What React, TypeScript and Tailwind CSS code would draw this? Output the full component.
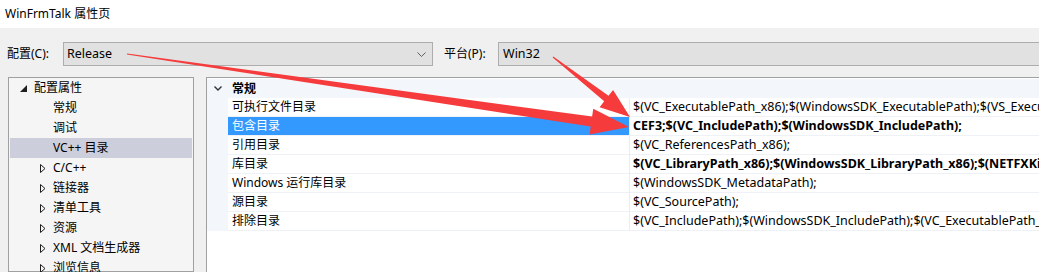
import React from "react";

const FONT = { fontFamily: "'Noto Sans', 'Noto Sans CJK SC', sans-serif" };

type Row = { name: string; value: string; bold?: boolean; selected?: boolean };

const rows: Row[] = [
  {
    name: "可执行文件目录",
    value:
      "$(VC_ExecutablePath_x86);$(WindowsSDK_ExecutablePath);$(VS_ExecutablePath);$(MSBuild_ExecutablePath);$(SystemRoot)\\SysWow64;$(FxCopDir);$(PATH);",
  },
  { name: "包含目录", value: "CEF3;$(VC_IncludePath);$(WindowsSDK_IncludePath);", bold: true, selected: true },
  { name: "引用目录", value: "$(VC_ReferencesPath_x86);" },
  {
    name: "库目录",
    value: "$(VC_LibraryPath_x86);$(WindowsSDK_LibraryPath_x86);$(NETFXKitsDir)Lib\\um\\x86",
    bold: true,
  },
  { name: "Windows 运行库目录", value: "$(WindowsSDK_MetadataPath);" },
  { name: "源目录", value: "$(VC_SourcePath);" },
  {
    name: "排除目录",
    value:
      "$(VC_IncludePath);$(WindowsSDK_IncludePath);$(VC_ExecutablePath_x86);$(VC_LibraryPath_x86);",
  },
];

const tree: { label: string; expander?: boolean; selected?: boolean }[] = [
  { label: "常规" },
  { label: "调试" },
  { label: "VC++ 目录", selected: true },
  { label: "C/C++", expander: true },
  { label: "链接器", expander: true },
  { label: "清单工具", expander: true },
  { label: "资源", expander: true },
  { label: "XML 文档生成器", expander: true },
  { label: "浏览信息", expander: true },
];

function arrowPoints(
  x1: number, y1: number, x2: number, y2: number,
  tw: number, sw: number, hw: number, hl: number
) {
  const dx = x2 - x1;
  const dy = y2 - y1;
  const L = Math.hypot(dx, dy);
  const ux = dx / L, uy = dy / L;
  const nx = -uy, ny = ux;
  const bx = x2 - ux * hl, by = y2 - uy * hl;
  const p = (x: number, y: number) => `${x.toFixed(1)},${y.toFixed(1)}`;
  return [
    p(x1 + nx * tw, y1 + ny * tw),
    p(bx + nx * sw, by + ny * sw),
    p(bx + nx * hw, by + ny * hw),
    p(x2, y2),
    p(bx - nx * hw, by - ny * hw),
    p(bx - nx * sw, by - ny * sw),
    p(x1 - nx * tw, y1 - ny * tw),
  ].join(" ");
}

function Expander() {
  return (
    <svg width="6" height="9" viewBox="0 0 6 9" className="shrink-0">
      <path d="M0.5 0.5 L5 4.5 L0.5 8.5 Z" fill="none" stroke="#1e1e1e" strokeWidth="1" />
    </svg>
  );
}

export default function App() {
  return (
    <div
      className="relative w-[1039px] h-[272px] overflow-hidden bg-[#f0f0f0] text-[12px] text-black"
      style={FONT}
    >
      {/* title bar */}
      <div className="h-[28px] bg-white pl-[5px] flex items-center">WinFrmTalk 属性页</div>

      {/* config row */}
      <div className="h-[49px] pt-[14px] pl-[7px] flex items-start">
        <div className="w-[56px] shrink-0 h-[24px] flex items-center">配置(C):</div>
        <div className="w-[370px] shrink-0 h-[24px] border border-[#adadad] bg-[#e1e1e1] flex items-center pl-[3px] pr-[6px]">
          <span className="flex-1 text-[12.5px]">Release</span>
          <svg width="9" height="5" viewBox="0 0 9 5">
            <path d="M0.5 0.5 L4.5 4.5 L8.5 0.5" fill="none" stroke="#606060" strokeWidth="1" />
          </svg>
        </div>
        <div className="ml-[11px] w-[54px] shrink-0 h-[24px] flex items-center">平台(P):</div>
        <div className="w-[600px] shrink-0 h-[24px] border border-[#adadad] bg-[#e1e1e1] flex items-center pl-[4px] text-[12.5px]">
          Win32
        </div>
      </div>

      {/* panels */}
      <div className="flex pl-[8px] h-[195px]">
        <div className="w-[186px] shrink-0 border border-[#a0a0a0] bg-[#f5f5f5] px-[1px]">
          <div className="h-[20px] flex items-center pl-[10px]">
            <svg width="7" height="7" viewBox="0 0 7 7" className="shrink-0">
              <path d="M7 0 L7 7 L0 7 Z" fill="#1e1e1e" />
            </svg>
            <span className="ml-[7px]">配置属性</span>
          </div>
          {tree.map((t) => (
            <div
              key={t.label}
              className={
                "h-[20px] flex items-center pl-[30px] " + (t.selected ? "bg-[#cccedb]" : "")
              }
            >
              <span className="w-[13px] flex items-center">{t.expander ? <Expander /> : null}</span>
              <span>{t.label}</span>
            </div>
          ))}
        </div>

        <div className="ml-[12px] w-[840px] shrink-0 border-l border-t border-[#a0a0a0] bg-white pt-[1px]">
          <div className="h-[19px] flex items-center bg-[#f3f6fb]">
            <span className="w-[21px] flex justify-center">
              <svg width="8" height="5" viewBox="0 0 8 5">
                <path d="M0.5 0.5 L4 4 L7.5 0.5" fill="none" stroke="#333" strokeWidth="1.4" />
              </svg>
            </span>
            <span className="pl-[4px] font-bold">常规</span>
          </div>
          {rows.map((r) => (
            <div key={r.name} className="h-[19px] flex">
              <div className="w-[21px] shrink-0 bg-[#f3f6fb]" />
              <div
                className={
                  "w-[401px] shrink-0 pl-[4px] flex items-center border-b border-[#eef1f6] " +
                  (r.selected ? "bg-[#3399ff] text-white border-[#3399ff]" : "")
                }
              >
                {r.name}
              </div>
              <div className="w-[1px] shrink-0 bg-[#e8ecf3]" />
              <div
                className={
                  "flex-1 min-w-0 pl-[3px] flex items-center border-b border-[#eef1f6] whitespace-nowrap overflow-hidden text-[12.5px] " +
                  (r.bold ? "font-bold" : "")
                }
              >
                {r.value}
              </div>
            </div>
          ))}
        </div>
      </div>

      {/* red annotation arrows */}
      <svg className="absolute left-0 top-0 pointer-events-none" width="1039" height="272">
        <polygon points={arrowPoints(127, 54, 629, 127, 0.5, 5, 13, 38)} fill="#f53b3b" />
        <polygon points={arrowPoints(553, 57, 630, 117, 0.5, 3.5, 11, 30)} fill="#f53b3b" />
      </svg>
    </div>
  );
}
